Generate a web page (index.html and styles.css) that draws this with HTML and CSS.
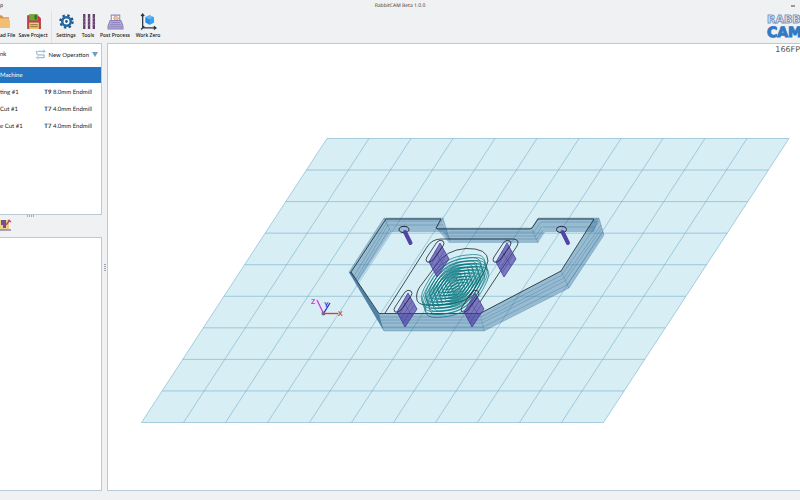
FILE: index.html
```
<!DOCTYPE html>
<html lang="en">
<head>
<meta charset="utf-8">
<title>RabbitCAM Beta 1.0.0</title>
<link rel="stylesheet" href="styles.css">
</head>
<body>
<header class="titlebar">
  <span class="menu">p</span>
  <h1 class="title">RabbitCAM Beta 1.0.0</h1>
  <button class="minimize" aria-label="Minimize"><svg width="4" height="2"><path d="M0 1H4" stroke="#444"/></svg></button>
</header>
<div class="toolbar">
  <nav class="tools">
    <button class="tool tool-file">
      <svg viewBox="0 0 16 16"><path d="M0 2h7l2 2h5v10H0z" fill="#d59343"/><path d="M0 5h13l2 2v7H0z" fill="#f4bd76"/></svg>
      <span>ad File</span>
    </button>
    <button class="tool tool-save">
      <svg viewBox="0 0 16 16"><path d="M2 2h10l3 3v10H2z" fill="#b94149"/><path d="M4 1h8v6H4z" fill="#6aab35"/><path d="M9 2h2v4H9z" fill="#415f2c"/><path d="M4 9h9v6H4z" fill="#f0cf70"/><path d="M5 11h7M5 13h7" stroke="#8a6d42"/></svg>
      <span>Save Project</span>
    </button>
    <button class="tool tool-settings">
      <svg viewBox="0 0 16 16"><circle cx="8" cy="8" r="5.7" fill="none" stroke="#1f5687" stroke-width="2.2" stroke-dasharray="2.2 2.28"/><circle cx="8" cy="8" r="4" fill="#fff" stroke="#2469a4" stroke-width="2.4"/><circle cx="8" cy="8" r="1.3" fill="#1f5687"/></svg>
      <span>Settings</span>
    </button>
    <button class="tool tool-tools">
      <svg viewBox="0 0 16 16"><path d="M4 1v14M8.500 1v14M13 1v14" stroke="#64416f" stroke-width="2.200"/><path d="M3 6l2-2m-2 5 2-2m-2 5 2-2m2.500-4 2-2m-2 5 2-2m-2 5 2-2m2.500-4 2-2m-2 5 2-2m-2 5 2-2" stroke="#a17bab" stroke-width=".8"/></svg>
      <span>Tools</span>
    </button>
    <button class="tool tool-post">
      <svg viewBox="0 0 16 16"><path d="M4 8V2h8v6" fill="#fff" stroke="#9289ba"/><path d="M6 5l2-3 3 3-2 3z" fill="#efc19a" stroke="#be8b7d" stroke-width=".7"/><path d="M3 7h10l2 5v3H1v-3z" fill="#b0abd8" stroke="#8a80bb"/><path d="M4 9h8M3 11h10M2 13h12" stroke="#8077b3" stroke-width=".7"/></svg>
      <span>Post Process</span>
    </button>
    <button class="tool tool-zero">
      <svg viewBox="0 0 16 16"><path d="M2.500 1v13H15M1 3l1.500-2L4 3M13 12.500l2 1.500-2 1.500M1 15.500l3-3" fill="none" stroke="#293647" stroke-width="1.200"/><path d="M9 2l4 2v5l-4 2-4-2V4z" fill="#278ee6"/><path d="M9 2l4 2-4 2-4-2z" fill="#67b7f4"/><path d="M9 6l4-2v5l-4 2z" fill="#3c9fee"/></svg>
      <span>Work Zero</span>
    </button>
  </nav>
  <div class="brand"><span class="brand-top">RABB</span><span class="brand-main">CAM</span></div>
</div>
<main class="workspace">
  <aside class="sidebar">
    <section class="panel operations">
      <div class="panel-head">
        <span>nk</span>
        <button class="new-op">
          <svg class="swap" viewBox="0 0 12 12"><path d="M3 2.500h8M1 2.500h1M2 2.500v3q0 1 1 1h7v3H3M1 9.500h1" fill="none" stroke="#79a5cb"/><path d="M9 .5l2 2-2 2M4 7.500l-2 2 2 2" fill="none" stroke="#79a5cb" stroke-width=".7"/></svg>
          <span>New Operation</span>
          <svg class="caret" viewBox="0 0 6 5"><path d="M0 0h6L3 5z" fill="#6f9fc9"/></svg>
        </button>
      </div>
      <ul class="op-list">
        <li class="op selected"><span>Machine</span></li>
        <li class="op"><span>ting #1</span><span><b>T9</b> 8.0mm Endmill</span></li>
        <li class="op"><span>Cut #1</span><span><b>T7</b> 4.0mm Endmill</span></li>
        <li class="op"><span>e Cut #1</span><span><b>T7</b> 4.0mm Endmill</span></li>
      </ul>
    </section>
    <div class="divider">
      <span class="grip"></span>
      <button class="sim" aria-label="Simulate"><svg width="12" height="14" viewBox="0 0 12 14"><path d="M0 2h9v10H0z" fill="#efcf82"/><path d="M1 2h5v5H1zM3 7h3v3H3z" fill="#744f91"/><path d="M6 7l4-5M8 2l3 2" stroke="#b9516d" stroke-width="1.500"/><path d="M0 12h11" stroke="#8f89a8" stroke-width="1.500"/></svg></button>
    </div>
    <section class="panel details"></section>
  </aside>
  <div class="splitter"><span class="grip-v"></span></div>
  <section class="viewport">
    <svg class="scene" viewBox="108 44 692 446" role="img" aria-label="Toolpath view">
      <path d="M327 138.500H789L603.500 422.500H141.500z" fill="#d8eef5"/>
      <g id="grid" stroke="#6aa8c8" stroke-opacity=".6" stroke-width=".9"></g>
      <g class="wall">
        <path d="M384 218H443L450 241 443 232H391z"/>
        <path d="M384 218L349 272 358 282 391 232z"/>
        <path d="M436 228H532L538 218 545 232 538 243H449z"/>
        <path d="M538 218H599L594 232H545z"/>
        <path d="M594 219L599 218 604 235 569 288 561 271z"/>
        <path d="M561 271L569 288 484 331 480 313z"/>
        <path d="M379 314H480L484 331H384z"/>
        <path class="dark" d="M349 272L384 331 379 314 351 272z"/>
      </g>
      <g class="edge">
        <path d="M384 218H443L450 241M599 218H538L532 228H438M384 218L349 272 384 331H484L569 288 604 235 599 218"/>
        <path d="M387 222L354 276M388 225L356 279M390 228L357 281M385 221H442M387 225H443M449 232H534L541 222M449 236H536L542 226M449 239H537L543 230M541 222H597M543 227H595M384 218L391 232M532 229L538 243"/>
        <path d="M380 317H481L562 275 599 221M381 320H482L564 278 601 225M382 323H482L565 281 602 228M383 327H483L567 285 603 232M561 271L569 288M480 313L484 331"/>
      </g>
      <g class="line">
        <path d="M386 219H441L436 228 438 229H530L532 228 538 219H594L561 271 480 313.500H379L351 272z"/>
        <path d="M385 313L427 247Q432 239 441 239H514Q520 240 517 246L480 302"/>
        <path d="M417 300Q415 292 422 284L437 264Q446 250 466 248.500Q488 248 488 261Q486 271 478 282L470 297Q458 306 425 305Q418 304 417 300z"/>
      </g>
      <g id="pocket" fill="none" stroke="#04747c" stroke-opacity=".75" stroke-width=".9"></g>
      <g id="tabs"></g>
      <g class="pin">
        <ellipse cx="404" cy="229.500" rx="5" ry="3.200"/><path d="M405 232L410.500 243"/>
        <ellipse cx="561.500" cy="229.500" rx="5" ry="3.200"/><path d="M562.500 232L568 243"/>
      </g>
      <g class="axes">
        <path d="M323.500 313.500H338" stroke="#e5323e"/>
        <path d="M323.500 313.500L330 303" stroke="#2733cc"/>
        <path d="M323.500 313.500L317 300" stroke="#cf37d8"/>
        <circle cx="323.500" cy="313.500" r="2" fill="#7b6485"/>
        <text x="338" y="316" fill="#e5323e">X</text>
        <text x="324" y="307" fill="#2733cc">Y</text>
        <text x="311" y="304" fill="#cf37d8">Z</text>
      </g>
    </svg>
    <output class="fps">166FP</output>
  </section>
</main>
<script src="scene.js"></script>
</body>
</html>
```
FILE: styles.css
```
* { box-sizing: border-box; }
body {
  margin: 0;
  height: 100vh;
  overflow: hidden;
  display: grid;
  grid-template-rows: 11px 32px 1fr;
  background: #f0f1f2;
  color: #222;
  font: 5px/8px "Noto Sans", "Open Sans", sans-serif;
  text-rendering: geometricPrecision;
}
button { border: 0; padding: 0; background: none; color: inherit; font: inherit; }
svg { display: block; }
.titlebar { display: grid; grid-template-columns: 1fr auto 1fr; align-items: center; }
.title { margin: 0; font-size: 5px; font-weight: 400; color: #444; }
.minimize { justify-self: end; margin-right: 5px; }
.toolbar { display: flex; justify-content: space-between; }
.tools { display: flex; }
.tool { display: flex; flex-direction: column; align-items: center; gap: 1px; white-space: nowrap; padding-top: 2px; font-weight: 500; color: #111; }
.tool svg { width: 17px; height: 17px; }
.tool-file { width: 15px; align-items: flex-start; }
.tool-file svg { margin-left: -6px; }
.tool-save { width: 37px; border-right: 1px solid #dfe3e7; }
.tool-settings { width: 28px; }
.tool-tools { width: 16px; }
.tool-post { width: 38px; }
.tool-zero { width: 28px; }
.brand { width: 33px; padding-top: 3px; display: flex; flex-direction: column; white-space: nowrap; font-family: "DejaVu Sans", sans-serif; font-weight: 700; }
.brand-top { font-size: 11px; line-height: 12px; color: #fff; -webkit-text-stroke: 1px #8295bd; }
.brand-main { font-size: 14px; line-height: 14px; color: #3278c3; -webkit-text-stroke: 1px #3278c3; }
.workspace { display: grid; grid-template-columns: 102px 5px 1fr; min-height: 0; padding-bottom: 9px; font-family: Lato, sans-serif; font-size: 6px; }
.sidebar { display: grid; grid-template-rows: 172fr 22px 253fr; min-width: 0; min-height: 0; }
.panel { background: #fff; border: 1px solid #b9c9d6; border-left: 0; }
.panel-head { height: 23px; padding: 0 3px 2px 0; display: flex; align-items: center; justify-content: space-between; }
.new-op { display: flex; align-items: center; gap: 2px; }
.swap { width: 11px; height: 11px; }
.caret { width: 6px; height: 5px; margin-left: 1px; }
.op-list { list-style: none; margin: 0; padding: 0; }
.op { height: 17px; padding: 2px 9px 0 0; display: flex; align-items: center; justify-content: space-between; white-space: nowrap; }
.op.selected { height: 16px; background: #2574c1; color: #fff; }
.divider { display: grid; grid-template-rows: 3px 1fr; }
.grip { width: 7px; height: 2px; margin-left: 27px; border-block: 1px dotted #a8adb4; }
.sim { align-self: start; justify-self: start; }
.splitter { display: flex; align-items: center; justify-content: flex-end; }
.grip-v { width: 2px; height: 7px; margin-right: 1px; border-inline: 1px dotted #9da2aa; }
.viewport { position: relative; background: #fff; border: 1px solid #b9c9d6; border-right: 0; overflow: hidden; }
.scene { width: 100%; height: 100%; }
.fps { position: absolute; top: 0; right: 0; font: 8px/11px "DejaVu Sans", sans-serif; color: #555; }
.wall { fill: #3f75a0; fill-opacity: .42; }
.wall .dark { fill: #245c88; fill-opacity: .75; }
.edge { fill: none; stroke: #245f8b; stroke-opacity: .35; stroke-width: .8; }
.line { fill: none; stroke: #18252c; stroke-width: .8; }
.tab { fill: #493aa0; fill-opacity: .65; stroke: #493aa0; stroke-width: .8; }
.slot { fill: none; stroke: #202036; stroke-width: .8; }
.ribs { fill: none; stroke: #322586; stroke-opacity: .4; stroke-width: .8; }
.pin ellipse { fill: none; stroke: #202036; stroke-width: 1; }
.pin path { fill: none; stroke: #5145a6; stroke-width: 4; stroke-linecap: round; }
.axes path { stroke-width: 1.3; }
.axes text { font: bold 7px "Liberation Sans", sans-serif; }
```
FILE: scene.js
```
function add(id, d, cls) {
  const path = document.createElementNS("http://www.w3.org/2000/svg", "path");
  path.setAttribute("d", d);
  if (cls) path.setAttribute("class", cls);
  document.getElementById(id).append(path);
}

// Stock grid: 11 by 9 cells
for (let i = 0; i <= 11; i++) add("grid", `M${327 + 42 * i} 138.5L${141.5 + 42 * i} 422.5`);
for (let j = 0; j <= 9; j++) {
  const x = 327 - 185.5 * j / 9;
  add("grid", `M${x} ${138.5 + 284 * j / 9}h462`);
}

// Pocket passes: concentric loops at each depth
const soften = v => Math.sign(v) * Math.pow(Math.abs(v), 0.75);
for (let depth = 0; depth < 5; depth++) {
  for (let ring = 1; ring <= 8; ring++) {
    const s = ring / 8;
    let d = "";
    for (let k = 0; k < 48; k++) {
      const t = k * Math.PI / 24;
      const c = soften(Math.cos(t)), n = soften(Math.sin(t));
      const x = 453 + depth + s * (26 * c + 14 * n);
      const y = 280 + depth * 3 - s * (25 * n + 3 * c);
      d += (k ? "L" : "M") + x.toFixed(1) + " " + y.toFixed(1);
    }
    add("pocket", d + "z");
  }
}

// Holding tabs with their slot outlines
for (const [x, y] of [[440, 243], [507, 243], [408, 293], [475, 293]]) {
  add("tabs", `M${x} ${y}l9 16-12 18-8-15z`, "tab");
  add("tabs", `M${x + 2} ${y + 4}l-11 18M${x + 4} ${y + 8}l-11 18M${x + 6} ${y + 12}l-11 18M${x - 5} ${y + 8}l9 15`, "ribs");
  add("tabs", `M${x - 3} ${y - 1}q3-3 6-1 2 2 0 5l-10 14q-3 3-6 2-2-2 0-5z`, "slot");
}
```
